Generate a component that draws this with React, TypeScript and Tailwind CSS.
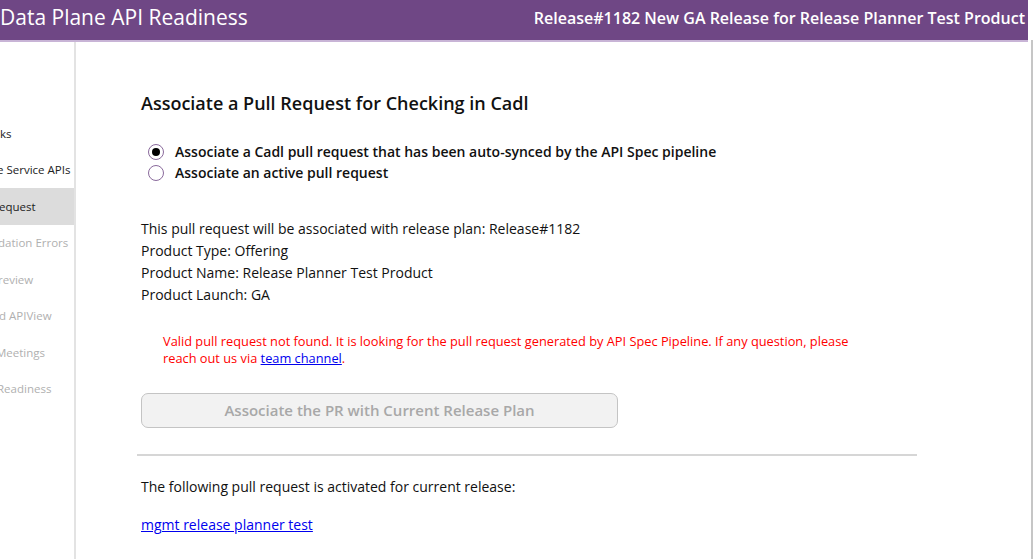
import React from "react";

const navItems = [
  { label: "ks", active: false, muted: false, shift: "ml-0" },
  { label: "e Service APIs", active: false, muted: false, shift: "-ml-[3px]" },
  { label: "equest", active: true, muted: false, shift: "-ml-[1px]" },
  { label: "dation Errors", active: false, muted: true, shift: "-ml-[2px]" },
  { label: "review", active: false, muted: true, shift: "-ml-[2px]" },
  { label: "d APIView", active: false, muted: true, shift: "-ml-[1px]" },
  { label: "Meetings", active: false, muted: true, shift: "-ml-[4px]" },
  { label: "Readiness", active: false, muted: true, shift: "-ml-[3px]" },
];

function Radio({ checked, label }: { checked: boolean; label: string }) {
  return (
    <label className="flex items-center h-[21px]">
      <span className="ml-[7px] w-[16px] h-[16px] rounded-full border border-[#8a6a9c] flex items-center justify-center bg-white">
        {checked && <span className="w-[8px] h-[8px] rounded-full bg-black" />}
      </span>
      <span className="ml-[11px] text-[14px] font-semibold text-[#111]">{label}</span>
    </label>
  );
}

export default function App() {
  return (
    <div
      className="w-[1033px] h-[559px] overflow-hidden bg-white flex flex-col"
      style={{ fontFamily: '"Open Sans", "Noto Sans", sans-serif' }}
    >
      <header className="h-[42px] flex shrink-0">
        <div className="flex-1 bg-[#6f4785] border-b-2 border-[#c8b4d6] flex items-center justify-between">
          <div className="text-white text-[21px] leading-none -mt-[5px]">Data Plane API Readiness</div>
          <div className="text-white text-[16px] font-semibold leading-none -mt-[5px] pr-[3px]">
            Release#1182 New GA Release for Release Planner Test Product
          </div>
        </div>
        <div className="w-[5px] bg-white flex justify-end">
          <div className="w-[2px] mt-[40px] bg-[#c6c6c6]" />
        </div>
      </header>
      <div className="flex flex-1 min-h-0">
        <nav className="w-[76px] shrink-0 border-r-2 border-[#e3e3e3] overflow-hidden pt-[73px]">
          {navItems.map((it) => (
            <div
              key={it.label}
              className={`h-[36.5px] flex items-center whitespace-nowrap text-[11.5px] ${
                it.active ? "bg-[#dcdcdc]" : ""
              } ${it.muted ? "text-[#b0b0b0]" : "text-[#222]"}`}
            >
              <span className={it.shift}>{it.label}</span>
            </div>
          ))}
        </nav>
        <main className="flex-1 pl-[65px] pt-[49px]">
          <h1 className="text-[18px] font-semibold text-[#111] leading-[24px]">
            Associate a Pull Request for Checking in Cadl
          </h1>
          <div className="mt-[26px] flex flex-col">
            <Radio checked label="Associate a Cadl pull request that has been auto-synced by the API Spec pipeline" />
            <Radio checked={false} label="Associate an active pull request" />
          </div>
          <div className="mt-[35px] text-[14px] text-[#111] leading-[22px]">
            <div>This pull request will be associated with release plan: Release#1182</div>
            <div>Product Type: Offering</div>
            <div>Product Name: Release Planner Test Product</div>
            <div>Product Launch: GA</div>
          </div>
          <div className="mt-[27px] pl-[22px] w-[730px] text-[12.8px] leading-[17px] text-[#ff0000]">
            Valid pull request not found. It is looking for the pull request generated by API Spec Pipeline. If any
            question, please reach out us via{" "}
            <a href="#" className="text-[#0000ee] underline">
              team channel
            </a>
            .
          </div>
          <button
            disabled
            className="mt-[26px] w-[477px] h-[35px] rounded-[7px] border border-[#c4c4c4] bg-[#f2f2f2] text-[15px] font-semibold text-[#a8a8a8]"
          >
            Associate the PR with Current Release Plan
          </button>
          <div className="mt-[26px] -ml-[4px] w-[780px] h-[2px] bg-[#d6d6d6]" />
          <div className="mt-[20px] text-[14px] text-[#111] leading-[22px]">
            The following pull request is activated for current release:
          </div>
          <a href="#" className="block mt-[16px] text-[14px] leading-[22px] text-[#0000ee] underline">
            mgmt release planner test
          </a>
        </main>
        <div className="w-[5px] bg-white flex justify-end">
          <div className="w-[2px] bg-[#c6c6c6]" />
        </div>
      </div>
    </div>
  );
}
